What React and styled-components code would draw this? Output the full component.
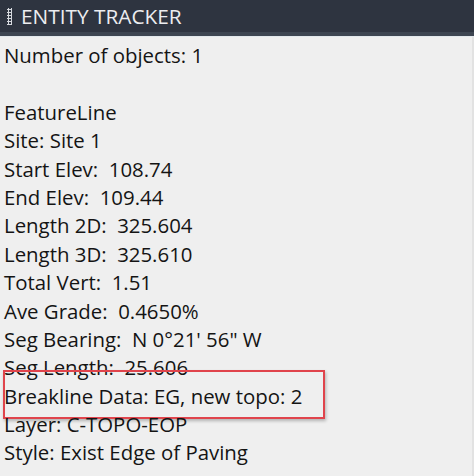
import React from "react";
import styled, { createGlobalStyle } from "styled-components";

const Global = createGlobalStyle`
  html, body { margin: 0; padding: 0; background: #efefef; }
  body { width: 474px; height: 476px; overflow: hidden; }
`;

const Panel = styled.div`
  width: 474px;
  height: 476px;
  display: flex;
  flex-direction: column;
  background: #efefef;
  font-family: "Open Sans", "Noto Sans", sans-serif;
  box-sizing: border-box;
  overflow: hidden;
`;

const Header = styled.div`
  height: 32px;
  background: #2e3440;
  display: flex;
  align-items: center;
  gap: 9px;
  padding-left: 7px;
  border-bottom: 4px solid #3d4551;
  box-shadow: 0 1px 0 #e2e8ec;
  flex-shrink: 0;
`;

const Grip = styled.div`
  width: 5px;
  height: 17px;
  background-image: radial-gradient(circle, #d6d9de 1px, transparent 1.2px);
  background-size: 3px 3px;
  background-position: 0 0;
  margin-top: 1px;
`;

const Title = styled.div`
  color: #ecedf0;
  font-size: 20.8px;
  line-height: 1;
  margin-top: 1px;
`;

const Body = styled.div`
  flex: 1;
  padding: 4px 0 0 4px;
  border-right: 2px solid #e2e2e2;
  margin-top: 1px;
`;

const Line = styled.div`
  position: relative;
  height: 28.4px;
  line-height: 28.4px;
  font-size: 20.4px;
  color: #141414;
  white-space: pre;
`;

const Highlight = styled.div`
  position: absolute;
  left: -1px;
  top: -12px;
  width: 318px;
  height: 45px;
  border: 2px solid #e0444c;
  box-shadow: 1px 2px 3px rgba(0, 0, 0, 0.25);
  pointer-events: none;
`;

const lines = [
  "Number of objects: 1",
  "",
  "FeatureLine",
  "Site: Site 1",
  "Start Elev:  108.74",
  "End Elev:  109.44",
  "Length 2D:  325.604",
  "Length 3D:  325.610",
  "Total Vert:  1.51",
  "Ave Grade:  0.4650%",
  "Seg Bearing:  N 0°21' 56\" W",
  "Seg Length:  25.606",
  "Breakline Data: EG, new topo: 2",
  "Layer: C-TOPO-EOP",
  "Style: Exist Edge of Paving",
];

export default function App() {
  return (
    <>
      <Global />
      <Panel>
        <Header>
          <Grip />
          <Title>ENTITY TRACKER</Title>
        </Header>
        <Body>
          {lines.map((l, i) => (
            <Line key={i}>
              {l}
              {l.startsWith("Breakline") && <Highlight />}
            </Line>
          ))}
        </Body>
      </Panel>
    </>
  );
}
